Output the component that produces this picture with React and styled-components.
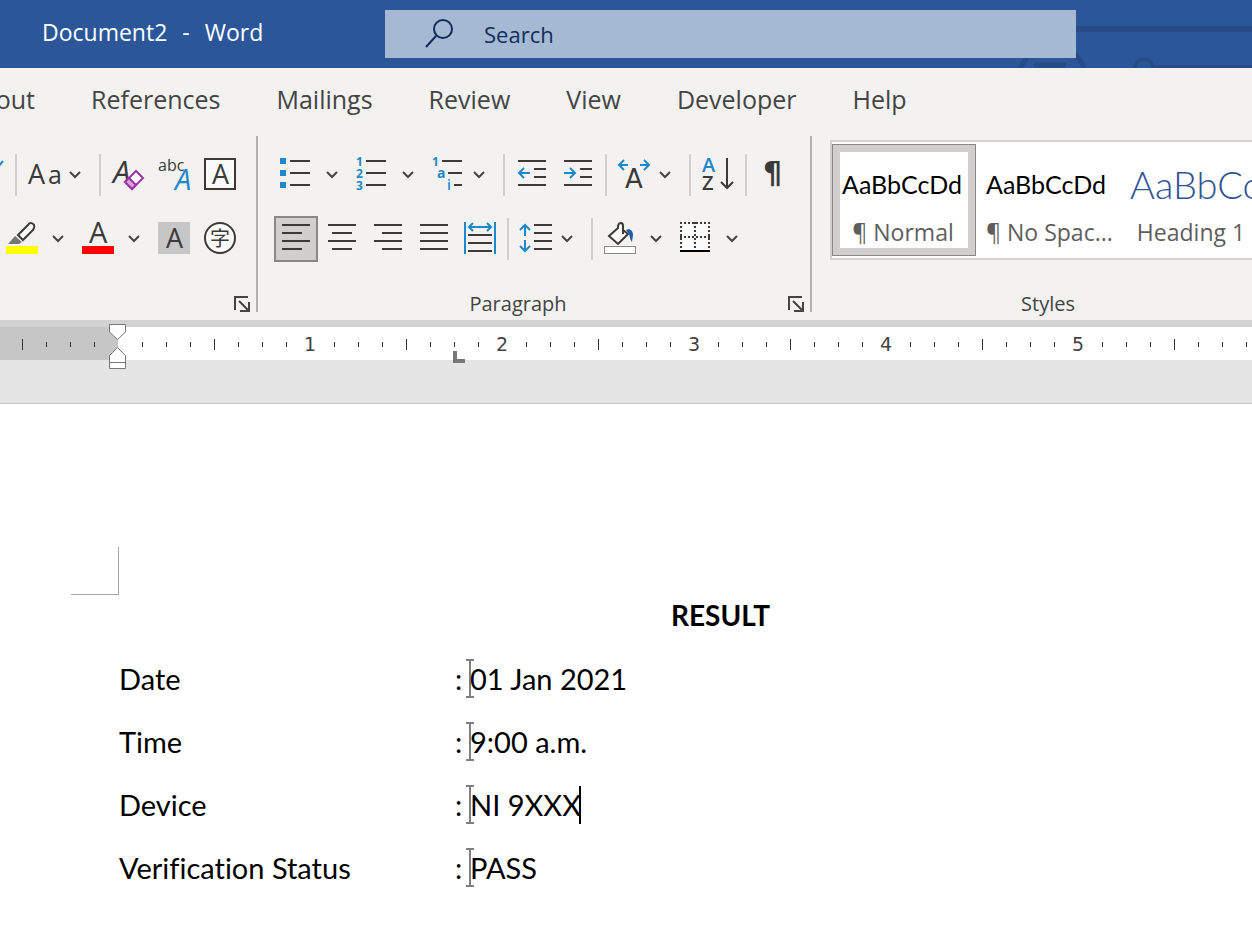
import React from "react";
import styled, { createGlobalStyle } from "styled-components";

const INK = "#3b3a39";
const BLUE = "#1e88c9";
const SANS = '"Open Sans", "Noto Sans", sans-serif';

const tabs = ["References", "Mailings", "Review", "View", "Developer", "Help"];

const details = [
  { label: "Date", value: "01 Jan 2021" },
  { label: "Time", value: "9:00 a.m." },
  { label: "Device", value: "NI 9XXX", caret: true },
  { label: "Verification Status", value: "PASS" },
];

// one tick for each eighth of an inch, zero sits on the left margin
const ticks = Array.from({ length: 110 }, (_, i) => i - 4);

const Icon = ({ children }) => (
  <svg width="32" height="32" viewBox="0 0 32 32" fill="none" stroke={INK} strokeWidth="2" aria-hidden="true">
    {children}
  </svg>
);

const Letter = ({ children, x, y, size, fill = INK, weight = 400, italic, font = SANS }) => (
  <text
    x={x}
    y={y}
    fontSize={size}
    fill={fill}
    stroke="none"
    fontFamily={font}
    fontWeight={weight}
    fontStyle={italic ? "italic" : "normal"}
  >
    {children}
  </text>
);

const Drop = ({ label }) => (
  <DropButton aria-label={label}>
    <svg width="12" height="8" viewBox="0 0 12 8" fill="none" stroke="#444" strokeWidth="2">
      <path d="M1 1L6 6L11 1" />
    </svg>
  </DropButton>
);

const Launcher = ({ label }) => (
  <LauncherButton aria-label={label}>
    <svg width="16" height="16" viewBox="0 0 16 16" fill="none" stroke="#444" strokeWidth="2">
      <path d="M1 14V1H14M5 5L14 14M15 6V15H6" />
    </svg>
  </LauncherButton>
);

const FontGroup = () => (
  <Group $pad={0} $width={258}>
    <Row>
      <Clipped>
        <svg width="4" height="32" viewBox="0 0 4 32" fill="none" stroke={BLUE} strokeWidth="2">
          <path d="M-2 9L3 3" />
        </svg>
      </Clipped>
      <Divider $before={0} />
      <Tool $compact aria-label="Change case">
        <Icon>
          <Letter x="0" y="26" size="27">A</Letter>
          <Letter x="20" y="26" size="25">a</Letter>
        </Icon>
      </Tool>
      <Drop label="Case options" />
      <Divider $before={6} />
      <Tool aria-label="Clear formatting">
        <Icon>
          <Letter x="1" y="25" size="31" italic>A</Letter>
          <path d="M13 24L24 13L31 20L20 31Z" fill="#fff" stroke="#9a35a6" />
          <path d="M13 24L17 20L24 27L20 31Z" fill="#dba0e0" stroke="#9a35a6" />
        </Icon>
      </Tool>
      <Tool aria-label="Phonetic guide">
        <Icon>
          <Letter x="0" y="13" size="16">abc</Letter>
          <Letter x="17" y="32" size="29" italic fill={BLUE}>A</Letter>
        </Icon>
      </Tool>
      <Tool aria-label="Character border">
        <Icon>
          <rect x="1" y="1" width="30" height="30" fill="#fafafa" />
          <Letter x="8" y="26" size="27">A</Letter>
        </Icon>
      </Tool>
    </Row>
    <Row>
      <Tool aria-label="Text highlight color">
        <Icon>
          <path d="M2 22L9 14L16 20L13 22Z" fill="#777" stroke="none" />
          <path d="M12 13L22 3C24 0 27 1 28 3C29 5 28 6 27 8L17 18Z" fill="#fafafa" />
          <rect x="0" y="24" width="32" height="8" fill="#ff0" stroke="none" />
        </Icon>
      </Tool>
      <Drop label="Highlight colors" />
      <Tool aria-label="Font color">
        <Icon>
          <Letter x="7" y="21" size="29">A</Letter>
          <rect x="0" y="24" width="32" height="8" fill="#f00" stroke="none" />
        </Icon>
      </Tool>
      <Drop label="Font colors" />
      <Tool aria-label="Character shading">
        <Icon>
          <rect width="32" height="32" fill="#c6c6c6" stroke="none" />
          <Letter x="8" y="26" size="27">A</Letter>
        </Icon>
      </Tool>
      <Tool aria-label="Enclose characters">
        <Icon>
          <circle cx="16" cy="16" r="15" fill="#fafafa" />
          <Letter x="6" y="24" size="20" font='"Noto Sans CJK JP", sans-serif'>字</Letter>
        </Icon>
      </Tool>
    </Row>
    <Footer>
      <GroupLabel />
      <Launcher label="Font settings" />
    </Footer>
  </Group>
);

const ParagraphGroup = () => (
  <Group $pad={16} $width={554}>
    <Row>
      <Tool aria-label="Bullets">
        <Icon>
          <path d="M0 3H6M0 15H6M0 27H6" stroke={BLUE} strokeWidth="6" />
          <path d="M10 3H30M10 15H30M10 27H30" />
        </Icon>
      </Tool>
      <Drop label="Bullet library" />
      <Tool aria-label="Numbering">
        <Icon>
          <Letter x="0" y="8" size="12" weight="700" fill={BLUE}>1</Letter>
          <Letter x="0" y="20" size="12" weight="700" fill={BLUE}>2</Letter>
          <Letter x="0" y="32" size="12" weight="700" fill={BLUE}>3</Letter>
          <path d="M10 3H30M10 15H30M10 27H30" />
        </Icon>
      </Tool>
      <Drop label="Numbering library" />
      <Tool $compact aria-label="Multilevel list">
        <Icon>
          <Letter x="0" y="8" size="12" weight="700" fill={BLUE}>1</Letter>
          <Letter x="5" y="20" size="14" weight="700" fill={BLUE}>a</Letter>
          <Letter x="15" y="32" size="14" weight="600" fill={BLUE}>i</Letter>
          <path d="M10 3H30M16 15H30M22 27H30" />
        </Icon>
      </Tool>
      <Drop label="List library" />
      <Divider $before={6} $after={7} />
      <Tool aria-label="Decrease indent">
        <Icon>
          <path d="M0 3H28M16 11H28M16 19H28M0 27H28" />
          <path d="M12 15H1M6 10L1 15L6 20" stroke={BLUE} />
        </Icon>
      </Tool>
      <Tool aria-label="Increase indent">
        <Icon>
          <path d="M0 3H28M16 11H28M16 19H28M0 27H28" />
          <path d="M0 15H11M6 10L11 15L6 20" stroke={BLUE} />
        </Icon>
      </Tool>
      <Divider $before={1} />
      <Tool $compact aria-label="Character scaling">
        <Icon>
          <path d="M10 7H1M6 2L1 7L6 12M22 7H31M26 2L31 7L26 12" stroke={BLUE} />
          <Letter x="7" y="30" size="26" font='"DejaVu Sans", sans-serif'>A</Letter>
        </Icon>
      </Tool>
      <Drop label="Scaling options" />
      <Divider $before={6} />
      <Tool aria-label="Sort">
        <Icon>
          <Letter x="0" y="14" size="20" weight="600" fill={BLUE}>A</Letter>
          <Letter x="0" y="32" size="20" weight="600">Z</Letter>
          <path d="M25 0V30M19 24L25 30L31 24" />
        </Icon>
      </Tool>
      <Divider $before={3} />
      <Tool aria-label="Show paragraph marks">
        <Icon>
          <Letter x="5" y="25" size="30" weight="700" font='"DejaVu Sans", sans-serif'>¶</Letter>
        </Icon>
      </Tool>
    </Row>
    <Row>
      <Tool $active aria-label="Align left">
        <Icon>
          <path d="M2 3H30M2 11H22M2 19H30M2 27H22" />
        </Icon>
      </Tool>
      <Tool aria-label="Center">
        <Icon>
          <path d="M2 3H30M6 11H26M2 19H30M6 27H26" />
        </Icon>
      </Tool>
      <Tool aria-label="Align right">
        <Icon>
          <path d="M2 3H30M10 11H30M2 19H30M10 27H30" />
        </Icon>
      </Tool>
      <Tool aria-label="Justify">
        <Icon>
          <path d="M2 3H30M2 11H30M2 19H30M2 27H30" />
        </Icon>
      </Tool>
      <Tool aria-label="Distribute">
        <Icon>
          <path d="M1 0V32M31 0V32M5 5H27M9 1L5 5L9 9M23 1L27 5L23 9" stroke={BLUE} />
          <path d="M4 13H28M4 21H28M4 29H28" />
        </Icon>
      </Tool>
      <Divider $before={3} />
      <Tool $compact aria-label="Line spacing">
        <Icon>
          <path d="M5 14V3M0 8L5 3L10 8M5 18V29M0 24L5 29L10 24" stroke={BLUE} />
          <path d="M14 3H32M14 11H32M14 19H32M14 27H32" />
        </Icon>
      </Tool>
      <Drop label="Line spacing options" />
      <Divider $before={6} />
      <Tool aria-label="Shading">
        <Icon>
          <path d="M19 12V4C19 0 15 0 14 4V6L5 14L14 22L24 12L19 8" fill="#fafafa" />
          <path d="M22 8C26 6 29 9 29 13L28 20C26 18 26 15 25 12Z" fill="#1c5fa8" stroke="none" />
          <rect x="0.5" y="24.5" width="31" height="7" fill="#fff" stroke="#8a8886" strokeWidth="1" />
        </Icon>
      </Tool>
      <Drop label="Shading colors" />
      <Tool aria-label="Borders">
        <Icon>
          <rect width="30" height="30" fill="#fafafa" stroke="none" />
          <path d="M0 1H30M0 15H30M1 0V28M15 0V28M29 0V28" strokeDasharray="2 2" />
          <path d="M0 29H30" stroke="#000" />
        </Icon>
      </Tool>
      <Drop label="Border options" />
    </Row>
    <Footer>
      <GroupLabel>Paragraph</GroupLabel>
      <Launcher label="Paragraph settings" />
    </Footer>
  </Group>
);

const StylesGroup = () => (
  <StylesPanel>
    <Gallery>
      <StyleCard $selected>
        <Sample>AaBbCcDd</Sample>
        <StyleName>¶ Normal</StyleName>
      </StyleCard>
      <StyleCard>
        <Sample>AaBbCcDd</Sample>
        <StyleName>¶ No Spac...</StyleName>
      </StyleCard>
      <StyleCard>
        <Sample $heading>AaBbCc</Sample>
        <StyleName>Heading 1</StyleName>
      </StyleCard>
    </Gallery>
    <Footer>
      <StylesLabel>Styles</StylesLabel>
    </Footer>
  </StylesPanel>
);

const Ruler = () => (
  <RulerBar>
    <Scale>
      {ticks.map((n) =>
        n > 0 && n % 8 === 0 ? (
          <Inch key={n}>{n / 8}</Inch>
        ) : (
          <Tick key={n}>{n !== 0 && <Mark $tall={n % 4 === 0} />}</Tick>
        )
      )}
    </Scale>
    <IndentMarker width="18" height="46" viewBox="0 0 18 46" fill="#fff" stroke="#777">
      <path d="M0.5 0.5H16.5V8L8.5 15.5L0.5 8Z" />
      <path d="M8.5 23.5L16.5 31.5V44.5H0.5V31.5ZM0.5 38.5H16.5" />
    </IndentMarker>
    <TabStop />
  </RulerBar>
);

const App = () => {
  return (
    <Window>
      <GlobalStyle />
      <TitleBar>
        <Backdrop width="252" height="68" viewBox="0 0 252 68" fill="none" stroke="#274b84">
          <path d="M70 29H252" strokeWidth="6" />
          <path d="M20 68C22 64 24 61 27 58M74 53C79 58 82 63 84 68" strokeWidth="5" />
          <path d="M34 65H66" strokeWidth="5" />
          <path d="M135 68C135 56 153 56 153 68M153 67H252" strokeWidth="4" />
        </Backdrop>
        <DocTitle>
          <span>Document2</span>
          <span>-</span>
          <span>Word</span>
        </DocTitle>
        <SearchBox>
          <svg width="28" height="30" viewBox="0 0 28 30" fill="none" stroke="#0f2c5c" strokeWidth="2">
            <circle cx="18" cy="10" r="9" />
            <path d="M11 17L1 28" />
          </svg>
          <SearchInput type="search" placeholder="Search" aria-label="Search" />
        </SearchBox>
      </TitleBar>
      <Tabs>
        <CutTab>
          <Tab>Layout</Tab>
        </CutTab>
        {tabs.map((tab) => (
          <Tab key={tab}>{tab}</Tab>
        ))}
      </Tabs>
      <Ribbon>
        <FontGroup />
        <ParagraphGroup />
        <StylesGroup />
      </Ribbon>
      <Ruler />
      <Page>
        <MarginCorner />
        <Heading>RESULT</Heading>
        <Details>
          {details.map(({ label, value, caret }) => (
            <Detail key={label}>
              <dt>{label}</dt>
              <Value>
                <span>:</span>
                <Beam width="8" height="40" viewBox="0 0 8 40" fill="none" stroke="#7f7f7f" strokeWidth="2">
                  <path d="M0 1H8M4 1V38M0 38H8" />
                </Beam>
                <span>{value}</span>
                {caret && <Caret />}
              </Value>
            </Detail>
          ))}
        </Details>
      </Page>
    </Window>
  );
};

const GlobalStyle = createGlobalStyle`
  * {
    box-sizing: border-box;
  }

  body {
    margin: 0;
    background: #fff;
    font-family: ${SANS};
    color: #444;
  }

  button {
    border: none;
    background: none;
    padding: 0;
    font: inherit;
    color: inherit;
    flex-shrink: 0;
  }

  svg {
    display: block;
    flex-shrink: 0;
    overflow: visible;
  }
`;

const Window = styled.div`
  display: flex;
  flex-direction: column;
  min-height: 100vh;
  overflow: hidden;
`;

const TitleBar = styled.header`
  position: relative;
  display: flex;
  align-items: center;
  height: 68px;
  padding-right: 176px;
  background: #2b579a;
`;

const Backdrop = styled.svg`
  position: absolute;
  right: 0;
  top: 0;
  overflow: hidden;
`;

const DocTitle = styled.div`
  display: flex;
  align-self: flex-start;
  gap: 15px;
  width: 385px;
  flex-shrink: 0;
  padding-left: 42px;
  font-size: 23px;
  line-height: 64px;
  color: #fff;
  white-space: nowrap;
`;

const SearchBox = styled.label`
  position: relative;
  display: flex;
  align-items: center;
  flex: 1;
  gap: 31px;
  height: 48px;
  padding-left: 40px;
  background: #a6b9d3;
`;

const SearchInput = styled.input`
  flex: 1;
  min-width: 0;
  padding: 0;
  border: none;
  outline: none;
  background: transparent;
  font-family: ${SANS};
  font-size: 22px;
  color: #0f2c5c;

  &::placeholder {
    color: #0f2c5c;
  }
`;

const Tabs = styled.nav`
  display: flex;
  gap: 56px;
  height: 68px;
  background: #f3f2f1;
`;

const CutTab = styled.div`
  display: flex;
  justify-content: flex-end;
  width: 35px;
  flex-shrink: 0;
  overflow: hidden;
`;

const Tab = styled.button`
  font-size: 25px;
  line-height: 62px;
  height: 62px;
`;

const Ribbon = styled.section`
  display: flex;
  padding-bottom: 8px;
  background: #f3f2f1;
`;

const Group = styled.div`
  display: flex;
  flex-direction: column;
  flex-shrink: 0;
  gap: 18px;
  width: ${(p) => p.$width}px;
  height: 176px;
  padding-top: 16px;
  padding-left: ${(p) => p.$pad}px;
  border-right: 2px solid #b3b0ad;
`;

const Row = styled.div`
  display: flex;
  height: 46px;
`;

const Clipped = styled.div`
  width: 15px;
  padding-top: 6px;
`;

const Divider = styled.div`
  width: 2px;
  height: 42px;
  margin: 2px ${(p) => p.$after || 5}px 0 ${(p) => p.$before}px;
  background: #d2d0ce;
`;

const Tool = styled.button`
  display: flex;
  width: ${(p) => (p.$compact ? 39 : 44)}px;
  height: 46px;
  margin-right: 2px;
  padding: 6px 0 0 6px;
  background: ${(p) => (p.$active ? "#d0cfcd" : "none")};
  box-shadow: ${(p) => (p.$active ? "inset 0 0 0 2px #8a8886" : "none")};
`;

const DropButton = styled.button`
  display: flex;
  align-items: center;
  width: 30px;
  height: 46px;
  padding-left: 6px;
`;

const Footer = styled.div`
  display: flex;
  height: 16px;
  margin-top: auto;
`;

const GroupLabel = styled.div`
  flex: 1;
  padding-right: 26px;
  font-size: 20px;
  line-height: 15px;
  text-align: center;
`;

const StylesLabel = styled(GroupLabel)`
  padding: 0 0 0 14px;
`;

const LauncherButton = styled.button`
  width: 16px;
  height: 16px;
  margin-right: 6px;
`;

const StylesPanel = styled.div`
  display: flex;
  flex-direction: column;
  flex: 1;
  min-width: 0;
  height: 176px;
  padding: 4px 0 0 18px;
`;

const Gallery = styled.div`
  display: flex;
  overflow: hidden;
  height: 120px;
  padding: 2px 0;
  border: 2px solid #d2d0ce;
  border-right: none;
  background: #fff;
`;

const StyleCard = styled.button`
  width: 144px;
  height: 112px;
  padding: 16px 0 0 10px;
  background: ${(p) => (p.$selected ? "linear-gradient(#fff, #fff) center / 128px 96px no-repeat #d0cfcd" : "none")};
  box-shadow: ${(p) => (p.$selected ? "inset 0 0 0 1px #888" : "none")};
  text-align: left;
`;

const Sample = styled.span`
  display: block;
  font-family: Lato, "Liberation Sans", sans-serif;
  font-size: ${(p) => (p.$heading ? 38 : 25)}px;
  font-weight: ${(p) => (p.$heading ? 300 : 400)};
  line-height: 48px;
  color: ${(p) => (p.$heading ? "#2f5496" : "#000")};
  white-space: nowrap;
`;

const StyleName = styled.span`
  display: block;
  width: 122px;
  font-size: 23px;
  line-height: 48px;
  text-align: center;
  white-space: nowrap;
  color: #605e5c;
`;

const RulerBar = styled.div`
  position: relative;
  height: 84px;
  padding-bottom: 43px;
  border-top: 7px solid #d2d2d2;
  border-bottom: 1px solid #c6c6c6;
  background: #e5e5e5;
`;

const Scale = styled.div`
  display: flex;
  overflow: hidden;
  height: 33px;
  padding-left: 10px;
  background: linear-gradient(to right, #c6c6c6 118px, #fff 118px);
`;

const Tick = styled.div`
  display: flex;
  align-items: center;
  justify-content: center;
  flex: 0 0 24px;
  height: 35px;
`;

const Inch = styled(Tick)`
  height: 33px;
  font-family: "DejaVu Sans", sans-serif;
  font-size: 19px;
`;

const Mark = styled.i`
  width: 1px;
  height: ${(p) => (p.$tall ? 11 : 5)}px;
  background: #333;
`;

const IndentMarker = styled.svg`
  position: absolute;
  left: 109px;
  top: -3px;
`;

const TabStop = styled.div`
  position: absolute;
  left: 453px;
  top: 24px;
  width: 12px;
  height: 12px;
  border-left: 4px solid #777;
  border-bottom: 4px solid #777;
`;

const Page = styled.main`
  flex: 1;
  padding: 143px 0 40px;
  background: #fff;
  font-family: Lato, "Liberation Sans", sans-serif;
  font-size: 29px;
  font-variant-ligatures: none;
  color: #000;
`;

const MarginCorner = styled.div`
  width: 48px;
  height: 48px;
  margin-left: 71px;
  border-right: 1px solid #a6a6a6;
  border-bottom: 1px solid #a6a6a6;
`;

const Heading = styled.h1`
  margin: -12px 0 0 189px;
  font-size: 28px;
  line-height: 64px;
  text-align: center;
`;

const Details = styled.dl`
  margin: 0 0 0 119px;
`;

const Detail = styled.div`
  display: grid;
  grid-template-columns: 336px 1fr;
  line-height: 63px;
  height: 63px;
`;

const Value = styled.dd`
  display: flex;
  align-items: center;
  margin: 0;

  span:first-child {
    width: 16px;
  }
`;

const Beam = styled.svg`
  margin: 0 -4px 0 -5px;
`;

const Caret = styled.i`
  width: 2px;
  height: 38px;
  margin-left: -2px;
  background: #000;
`;

export default App;
